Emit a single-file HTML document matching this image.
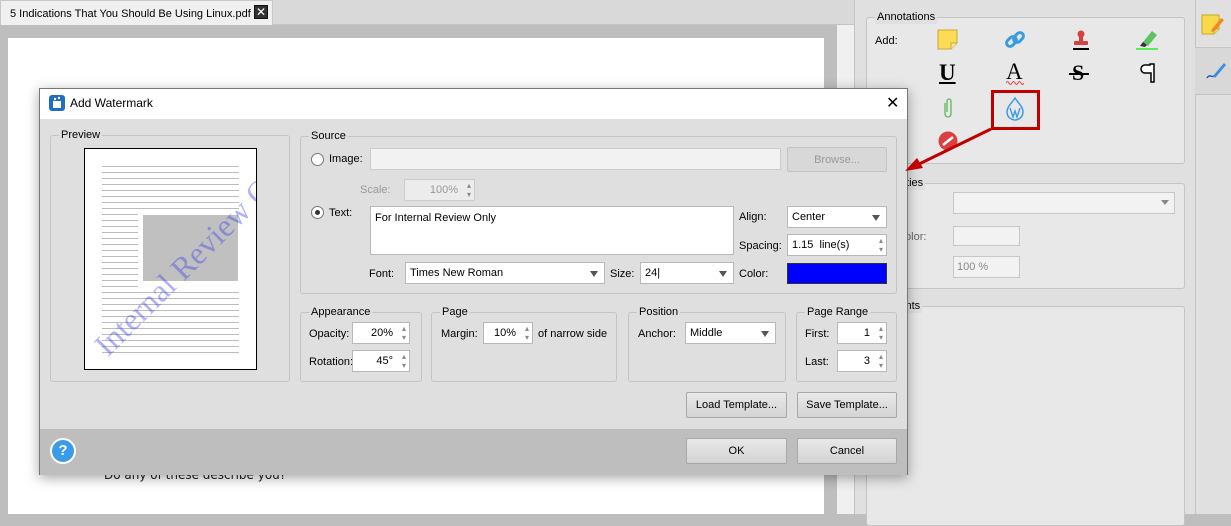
<!DOCTYPE html>
<html><head><meta charset="utf-8"><style>
*{box-sizing:border-box;margin:0;padding:0}
body{width:1231px;height:514px;position:relative;overflow:hidden;font-family:"Liberation Sans",sans-serif;font-size:11px;color:#000;background:#bebebe;white-space:nowrap}
.a{position:absolute}
.grp{position:absolute;border:1px solid #c4c4c4;border-radius:3px}
.gl{position:absolute;top:-8px;left:8px;padding:0 2px;background:#dfdfdf;font-size:11px;line-height:14px}
.inp{position:absolute;background:#fff;border:1px solid #b8b8b8;font-size:11px;line-height:20px;padding:0 4px}
.dd::after{content:"";position:absolute;right:6px;top:8px;border-left:4px solid transparent;border-right:4px solid transparent;border-top:6px solid #555}
.sp::after{content:"▴\A▾";white-space:pre;position:absolute;right:3px;top:1px;font-size:8px;line-height:9px;color:#888}
.btn{position:absolute;border:1px solid #a8a8a8;border-radius:2px;background:linear-gradient(#e8e8e8,#d4d4d4);text-align:center;font-size:11px;line-height:24px}
.pl{position:absolute;height:1px;background:#bcbcbc}
</style></head><body>
<div class="a" style="left:0;top:0;width:855px;height:25px;background:#d9d9d9;border-bottom:1px solid #c4c4c4"></div>
<div class="a" style="left:0;top:0;width:273px;height:25px;background:#f0f0f0;border:1px solid #c8c8c8;border-bottom:none;font-size:11px;line-height:26px;padding-left:9px">5 Indications That You Should Be Using Linux.pdf</div>
<div class="a" style="left:254px;top:5px;width:14px;height:14px;background:#333;color:#fff;font-size:12px;line-height:13px;text-align:center;border:1px solid #111">✕</div>
<div class="a" style="left:8px;top:38px;width:816px;height:476px;background:#fff"></div>
<div class="a" style="left:837px;top:25px;width:17px;height:489px;background:#f0f0f0"></div>
<div class="a" style="left:104px;top:468px;font-family:'DejaVu Sans',sans-serif;font-size:12px;color:#222">Do any of these describe you?</div>
<div class="a" style="left:854px;top:0;width:342px;height:514px;background:#e0e0e0;border-left:1px solid #c4c4c4"></div>
<div class="a" style="left:1195px;top:0;width:36px;height:514px;background:#e0e0e0;border-left:1px solid #c4c4c4"></div>
<div class="a" style="left:1195px;top:47px;width:36px;height:48px;background:#d8d8d8;border-top:1px solid #c4c4c4;border-bottom:1px solid #c4c4c4"></div>
<svg class="a" style="left:1200px;top:12px" width="26" height="26"><path d="M2 3h17v14l-5 5H2z" fill="#fbd84a" stroke="#c9a827"/><path d="M14 22v-5h5" fill="#f0e0a0" stroke="#c9a827"/><path d="M12 17l9-11 3 2-9 11-4 1z" fill="#f08a24"/></svg>
<svg class="a" style="left:1203px;top:60px" width="24" height="22"><path d="M4 18c3-5 5 1 8-3" stroke="#1a5bbd" fill="none" stroke-width="1.5"/><path d="M10 16L21 3l2 2-11 13z" fill="#3b8ee0"/></svg>
<div class="grp" style="left:866px;top:17px;width:319px;height:147px;background:#e8e8e8"><div class="gl" style="background:#e0e0e0">Annotations</div></div>
<div class="a" style="left:875px;top:35px">Add:</div>
<svg class="a" style="left:937px;top:29px" width="22" height="22"><path d="M1 1h19v13l-6 6H1z" fill="#fddb54" stroke="#c8a73a"/><path d="M14 20v-6h6" fill="#f5e9a8" stroke="#c8a73a"/></svg>
<svg class="a" style="left:1004px;top:29px" width="22" height="22"><g fill="none" stroke="#3a9be0" stroke-width="3"><rect x="2" y="9" width="11" height="7" rx="3.5" transform="rotate(-45 7.5 12.5)"/><rect x="9" y="5" width="11" height="7" rx="3.5" transform="rotate(-45 14.5 8.5)"/></g></svg>
<svg class="a" style="left:1072px;top:29px" width="18" height="22"><circle cx="9" cy="5" r="3.5" fill="#d84040"/><rect x="7" y="7" width="4" height="6" fill="#d84040"/><rect x="2" y="12" width="14" height="4" rx="1" fill="#d84040"/><rect x="1" y="19" width="16" height="2" fill="#000"/></svg>
<svg class="a" style="left:1136px;top:29px" width="22" height="22"><path d="M7 13l9-11 5 4-9 11z" fill="#5fc45f"/><path d="M4 17l3-4 4 3-2 2z" fill="#333"/><rect x="0" y="19" width="22" height="2" fill="#55ee55"/></svg>
<div class="a" style="left:939px;top:60px;font-family:'Liberation Serif',serif;font-size:23px;font-weight:bold;text-decoration:underline;line-height:26px">U</div>
<div class="a" style="left:1006px;top:60px;font-family:'Liberation Serif',serif;font-size:23px;line-height:24px">A</div>
<svg class="a" style="left:1006px;top:80px" width="18" height="5"><path d="M0 3q1.5-3 3 0t3 0 3 0 3 0 3 0 3 0" stroke="#d44" fill="none"/></svg>
<div class="a" style="left:1072px;top:60px;font-family:'Liberation Serif',serif;font-size:22px;font-weight:bold;line-height:26px">S</div>
<div class="a" style="left:1069px;top:73px;width:20px;height:2px;background:#000"></div>
<svg class="a" style="left:1138px;top:62px" width="18" height="22"><path d="M12 2h4v18h-3v-9H7a4 4 0 0 1 0-8h5z" fill="#fff" stroke="#000" stroke-width="1.5"/></svg>
<svg class="a" style="left:942px;top:97px" width="12" height="22"><path d="M3 6v11a3 3 0 0 0 6 0V4a2 2 0 0 0-4 0v11" fill="none" stroke="#5cb85c" stroke-width="1.3"/></svg>
<div class="a" style="left:991px;top:90px;width:49px;height:40px;border:3px solid #c00000"></div>
<svg class="a" style="left:1004px;top:96px" width="22" height="26"><path d="M11 2C7 8 3 11 3 16a8 8 0 0 0 16 0c0-5-4-8-8-14z" fill="none" stroke="#3a9be0" stroke-width="1.5"/><path d="M6 12l3 9 2-6 2 6 3-9" fill="none" stroke="#3a9be0" stroke-width="1.4"/></svg>
<svg class="a" style="left:938px;top:131px" width="20" height="20"><circle cx="10" cy="10" r="9.5" fill="#d94040"/><path d="M5 14l10-8" stroke="#fff" stroke-width="2.5"/></svg>
<div class="grp" style="left:866px;top:183px;width:319px;height:106px;background:#e8e8e8"><div class="gl" style="background:#e0e0e0;left:4px">Properties</div></div>
<div class="a" style="left:953px;top:192px;width:222px;height:22px;background:#f2f2f2;border:1px solid #c8c8c8"></div>
<div class="a" style="left:1161px;top:200px;border-left:4px solid transparent;border-right:4px solid transparent;border-top:5px solid #888"></div>
<div class="a" style="left:880px;top:231px;color:#666">Fill Color:</div>
<div class="a" style="left:953px;top:226px;width:67px;height:20px;background:#f2f2f2;border:1px solid #c8c8c8"></div>
<div class="a" style="left:868px;top:262px;color:#666">Opacity:</div>
<div class="a" style="left:953px;top:256px;width:67px;height:22px;background:#f2f2f2;border:1px solid #c8c8c8;color:#888;padding-left:3px;line-height:20px">100 %</div>
<div class="grp" style="left:866px;top:306px;width:319px;height:220px;background:#e8e8e8"><div class="gl" style="background:#e0e0e0;left:-2px">Comments</div></div>
<!-- dialog -->
<div class="a" style="left:39px;top:88px;width:869px;height:387px;background:#dfdfdf;border:1px solid #777;box-shadow:0 3px 12px rgba(0,0,0,.35)">
 <div class="a" style="left:0;top:0;width:867px;height:30px;background:#fff"></div>
 <svg class="a" style="left:9px;top:6px" width="16" height="16"><rect width="16" height="16" rx="3" fill="#1f6ec2"/><rect x="4" y="6" width="8" height="7" fill="#fff"/><circle cx="6" cy="4" r="1.2" fill="#fff"/><circle cx="10" cy="3" r="1.2" fill="#fff"/></svg>
 <div class="a" style="left:30px;top:7px;font-size:12px">Add Watermark</div>
 <div class="a" style="left:846px;top:4px;font-size:16px;font-weight:300">✕</div>
 <div class="a" style="left:0;top:340px;width:867px;height:46px;background:#bebebe"></div>
</div>
<svg class="a" style="left:895px;top:125px" width="100" height="60"><path d="M96 4L20 41" stroke="#c00000" stroke-width="3"/><path d="M10 46l12-13 6 10z" fill="#c00000"/></svg>
<div class="grp" style="left:50px;top:135px;width:240px;height:247px"><div class="gl">Preview</div></div>
<div class="a" style="left:84px;top:148px;width:173px;height:222px;background:#fff;border:1px solid #000;overflow:hidden">
 <div class="pl" style="left:17px;top:17px;width:137px;box-shadow:0 6px #bcbcbc,0 12px #bcbcbc,0 18px #bcbcbc,0 24px #bcbcbc,0 30px #bcbcbc,0 36px #bcbcbc,0 42px #bcbcbc"></div>
 <div class="pl" style="left:17px;top:65px;width:36px;box-shadow:0 6px #bcbcbc,0 12px #bcbcbc,0 18px #bcbcbc,0 24px #bcbcbc,0 30px #bcbcbc,0 36px #bcbcbc,0 42px #bcbcbc,0 48px #bcbcbc,0 54px #bcbcbc,0 60px #bcbcbc,0 66px #bcbcbc,0 72px #bcbcbc"></div>
 <div class="a" style="left:58px;top:66px;width:95px;height:66px;background:#c0c0c0"></div>
 <div class="pl" style="left:17px;top:143px;width:137px;box-shadow:0 6px #bcbcbc,0 12px #bcbcbc,0 18px #bcbcbc,0 24px #bcbcbc,0 30px #bcbcbc,0 36px #bcbcbc,0 42px #bcbcbc,0 48px #bcbcbc,0 54px #bcbcbc,0 60px #bcbcbc"></div>
 <div class="a" style="left:-20px;top:98px;width:240px;font-family:'Liberation Serif',serif;font-size:32px;color:rgba(60,60,230,.4);transform:rotate(-45deg);white-space:nowrap;transform-origin:50% 50%">Internal Review O</div>
</div>
<div class="grp" style="left:300px;top:136px;width:597px;height:158px"><div class="gl">Source</div></div>
<div class="a" style="left:311px;top:153px;width:13px;height:13px;border:1px solid #777;border-radius:50%;background:#fff"></div>
<div class="a" style="left:329px;top:153px">Image:</div>
<div class="a" style="left:370px;top:148px;width:411px;height:22px;background:#f2f2f2;border:1px solid #ccc"></div>
<div class="btn" style="left:787px;top:147px;width:100px;height:25px;color:#999;background:#d8d8d8;border-color:#c4c4c4">Browse...</div>
<div class="a" style="left:360px;top:184px;color:#999">Scale:</div>
<div class="inp sp" style="left:404px;top:179px;width:71px;height:22px;background:#ececec;color:#999;text-align:right;padding-right:16px;border-color:#ccc">100%</div>
<div class="a" style="left:311px;top:206px;width:13px;height:13px;border:1px solid #777;border-radius:50%;background:#fff"><div class="a" style="left:3px;top:3px;width:5px;height:5px;border-radius:50%;background:#333"></div></div>
<div class="a" style="left:329px;top:207px">Text:</div>
<div class="inp" style="left:370px;top:206px;width:364px;height:49px;line-height:22px">For Internal Review Only</div>
<div class="a" style="left:739px;top:211px">Align:</div>
<div class="inp dd" style="left:787px;top:206px;width:100px;height:22px">Center</div>
<div class="a" style="left:739px;top:240px">Spacing:</div>
<div class="inp sp" style="left:787px;top:234px;width:100px;height:22px">1.15 &nbsp;line(s)</div>
<div class="a" style="left:369px;top:268px">Font:</div>
<div class="inp dd" style="left:405px;top:262px;width:200px;height:22px">Times New Roman</div>
<div class="a" style="left:610px;top:268px">Size:</div>
<div class="inp dd" style="left:640px;top:262px;width:94px;height:22px">24|</div>
<div class="a" style="left:739px;top:268px">Color:</div>
<div class="a" style="left:787px;top:263px;width:100px;height:21px;background:#0000ff;border:1px solid #333"></div>
<div class="grp" style="left:300px;top:312px;width:122px;height:70px"><div class="gl">Appearance</div></div>
<div class="a" style="left:309px;top:328px">Opacity:</div>
<div class="inp sp" style="left:352px;top:322px;width:58px;height:22px;text-align:right;padding-right:16px">20%</div>
<div class="a" style="left:309px;top:356px">Rotation:</div>
<div class="inp sp" style="left:352px;top:350px;width:58px;height:22px;text-align:right;padding-right:16px">45°</div>
<div class="grp" style="left:431px;top:312px;width:186px;height:70px"><div class="gl">Page</div></div>
<div class="a" style="left:441px;top:328px">Margin:</div>
<div class="inp sp" style="left:483px;top:322px;width:50px;height:22px;text-align:right;padding-right:16px">10%</div>
<div class="a" style="left:538px;top:328px">of narrow side</div>
<div class="grp" style="left:628px;top:312px;width:158px;height:70px"><div class="gl">Position</div></div>
<div class="a" style="left:638px;top:328px">Anchor:</div>
<div class="inp dd" style="left:685px;top:322px;width:91px;height:22px">Middle</div>
<div class="grp" style="left:796px;top:312px;width:101px;height:70px"><div class="gl">Page Range</div></div>
<div class="a" style="left:805px;top:328px">First:</div>
<div class="inp sp" style="left:837px;top:322px;width:50px;height:22px;text-align:right;padding-right:16px">1</div>
<div class="a" style="left:805px;top:356px">Last:</div>
<div class="inp sp" style="left:837px;top:350px;width:50px;height:22px;text-align:right;padding-right:16px">3</div>
<div class="btn" style="left:686px;top:392px;width:101px;height:26px">Load Template...</div>
<div class="btn" style="left:797px;top:392px;width:100px;height:26px">Save Template...</div>
<div class="btn" style="left:686px;top:438px;width:101px;height:26px">OK</div>
<div class="btn" style="left:797px;top:438px;width:100px;height:26px">Cancel</div>
<div class="a" style="left:50px;top:438px;width:26px;height:26px;border-radius:50%;background:#3a9be8;border:2px solid #fff;color:#fff;font-weight:bold;font-size:15px;text-align:center;line-height:22px">?</div>
</body></html>
